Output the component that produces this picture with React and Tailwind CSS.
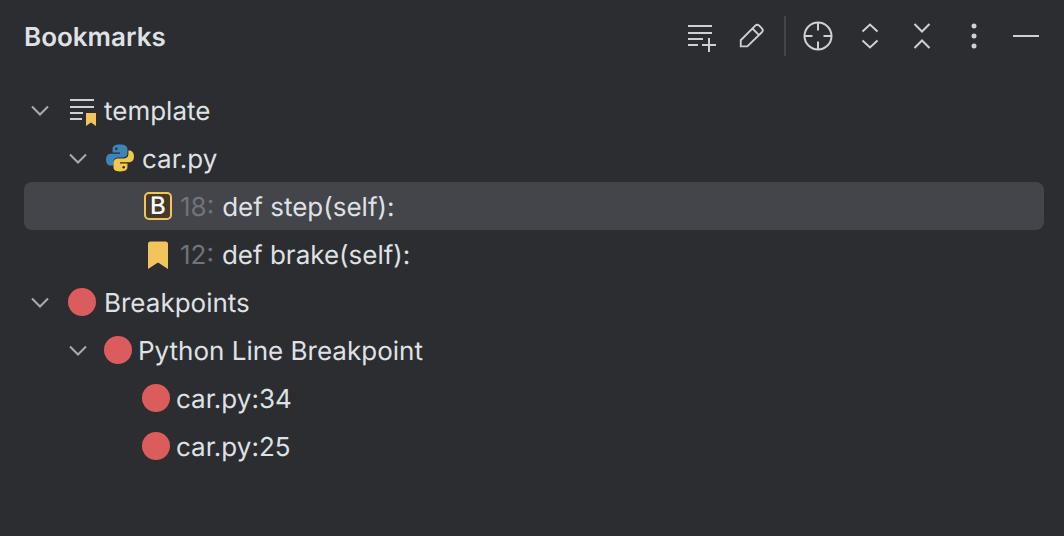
const S = "#ced0d6";
const Chevron = ({ className }) => (
  <svg className={className} width="32" height="32" viewBox="0 0 32 32" fill="none" stroke="#a8abb2" strokeWidth="2"><path d="M8 12.500l8 8 8-8" /></svg>
);
const Dot = ({ className }) => <span className={`block w-7 h-7 rounded-full bg-[#db5c5c] shrink-0 ${className || ""}`} />;
const Bookmark = ({ className }) => (
  <svg className={className} width="20" height="28" viewBox="0 0 20 28"><path d="M0 3a2.500 2.500 0 0 1 2.500-2.500h15A2.500 2.500 0 0 1 20 3v25l-10-6.500L0 28z" fill="#f2c55c" /></svg>
);
const Python = ({ className }) => (
  <svg className={className} width="28" height="28" viewBox="0 0 30 30">
    <path d="M15 .500c-6 0-8 2-8 5V9h8v1.500H5C2 10.500 0 12.500 0 16.500S2 23 5 23h3v-4c0-2.500 2-4.500 4.500-4.500h6c2.500 0 4.500-2 4.500-4.500V5.500C23 2.500 20.500.500 15 .500z" fill="#3d85b8" />
    <circle cx="11" cy="5" r="1.300" fill="#2b2d30" />
    <path d="M15 29.500c6 0 8-2 8-5V21h-8v-1.500h10c3 0 5-2 5-6S28 7 25 7h-1v4c0 2.500-2 4.500-4.500 4.500h-7C10 15.500 8 17.500 8 20v4.500C8 27.500 9.500 29.500 15 29.500z" fill="#f2c94c" />
    <circle cx="19" cy="25" r="1.300" fill="#2b2d30" />
  </svg>
);
const Tb = ({ children, className }) => (
  <span className={`flex items-center justify-center h-8 ${className}`}>{children}</span>
);
const T = ({ children, className }) => <span className={`pt-[4px] ${className || ""}`}>{children}</span>;
const svg = { width: 32, height: 32, viewBox: "0 0 32 32", fill: "none", stroke: S, strokeWidth: 2 };

export default function App() {
  return (
    <div className="w-[1064px] h-[536px] bg-[#2b2d30] text-[#dfe1e5] text-[26px] leading-[32px] overflow-hidden font-['Inter',sans-serif] [text-rendering:geometricPrecision]">
      <div className="flex items-center h-[72px] pl-6 pr-3">
        <h1 className="flex-1 pt-[4px] font-semibold text-[26px] leading-8 text-[#dfe1e5]">Bookmarks</h1>
        <Tb className="w-8 mr-[18px]">
          <svg {...svg}><path d="M3 6h24M3 13h24M3 19h15M3 25h10M24 18v14M17 25h14" /></svg>
        </Tb>
        <Tb className="w-8">
          <svg {...svg} className="ml-[2px]"><path d="M4 27v-6.500L19.500 5a3 3 0 0 1 4.200 0l2.800 2.800a3 3 0 0 1 0 4.200L11 27z M16.500 8l7 7" /></svg>
        </Tb>
        <span className="w-[2px] h-10 bg-[#43454a] ml-[17px] mr-[16px]" />
        <Tb className="w-8 mr-5">
          <svg {...svg}><circle cx="16" cy="16" r="13.500" /><path d="M16 2.500v8M16 21.500v8M2.500 16h8M21.500 16h8" /></svg>
        </Tb>
        <Tb className="w-8 mr-5">
          <svg {...svg}><path d="M8.500 11.500L16 4.500l7.500 7M8.500 20.500l7.500 7 7.500-7" /></svg>
        </Tb>
        <Tb className="w-8 mr-5">
          <svg {...svg}><path d="M8.500 4l7.500 7.500L23.500 4M8.500 28l7.500-7.500L23.500 28" /></svg>
        </Tb>
        <Tb className="w-8 mr-5">
          <svg width="32" height="32" viewBox="0 0 32 32" fill={S}><circle cx="16" cy="6" r="2.500" /><circle cx="16" cy="16" r="2.500" /><circle cx="16" cy="26" r="2.500" /></svg>
        </Tb>
        <Tb className="w-8 mr-[10px]">
          <svg {...svg} width="28" height="32" viewBox="0 0 28 32"><path d="M1 16h26" /></svg>
        </Tb>
      </div>

      <div className="mt-[14px] ml-6 mr-5 flex flex-col">
        <div className="flex items-center h-12">
          <Chevron />
          <span className="relative block w-7 h-7 ml-[12px] mr-2 shrink-0">
            <svg width="28" height="28" viewBox="0 0 28 28" fill="none" stroke="#ced0d6" strokeWidth="2" className="absolute left-[2px] top-[-1px]"><path d="M0 5h24M0 12h24M0 18h13M0 24h12" /></svg>
            <svg width="12" height="13" viewBox="0 0 12 13" className="absolute left-[17px] top-[17px]"><path d="M1 0h10v13l-5-3.500L1 13z" fill="#f2c55c" /></svg>
          </span>
          <T>template</T>
        </div>
        <div className="flex items-center h-12 pl-[38px]">
          <Chevron />
          <Python className="ml-[12px] mr-[8px] shrink-0" />
          <T>car.py</T>
        </div>
        <div className="flex items-center h-12 pl-[120px] bg-[#43454a] rounded-lg">
          <span className="flex items-center justify-center w-7 h-7 border-2 border-[#f2c55c] bg-[#45392a] rounded-[5px] text-white text-[24px] leading-none font-medium shrink-0">B</span>
          <T className="ml-2 text-[#6f737a]">18:</T>
          <T className="ml-[8px]">def step(self):</T>
        </div>
        <div className="flex items-center h-12 pl-[124px]">
          <Bookmark className="shrink-0 mt-[2px]" />
          <T className="ml-3 text-[#6f737a]">12:</T>
          <T className="ml-[8px]">def brake(self):</T>
        </div>
        <div className="flex items-center h-12">
          <Chevron />
          <Dot className="ml-3 mr-2" />
          <T>Breakpoints</T>
        </div>
        <div className="flex items-center h-12 pl-[38px]">
          <Chevron />
          <Dot className="ml-[10px] mr-[6px]" />
          <T>Python Line Breakpoint</T>
        </div>
        <div className="flex items-center h-12 pl-[118px]">
          <Dot className="mr-[6px]" />
          <T>car.py:34</T>
        </div>
        <div className="flex items-center h-12 pl-[118px]">
          <Dot className="mr-[6px]" />
          <T>car.py:25</T>
        </div>
      </div>
    </div>
  );
}
